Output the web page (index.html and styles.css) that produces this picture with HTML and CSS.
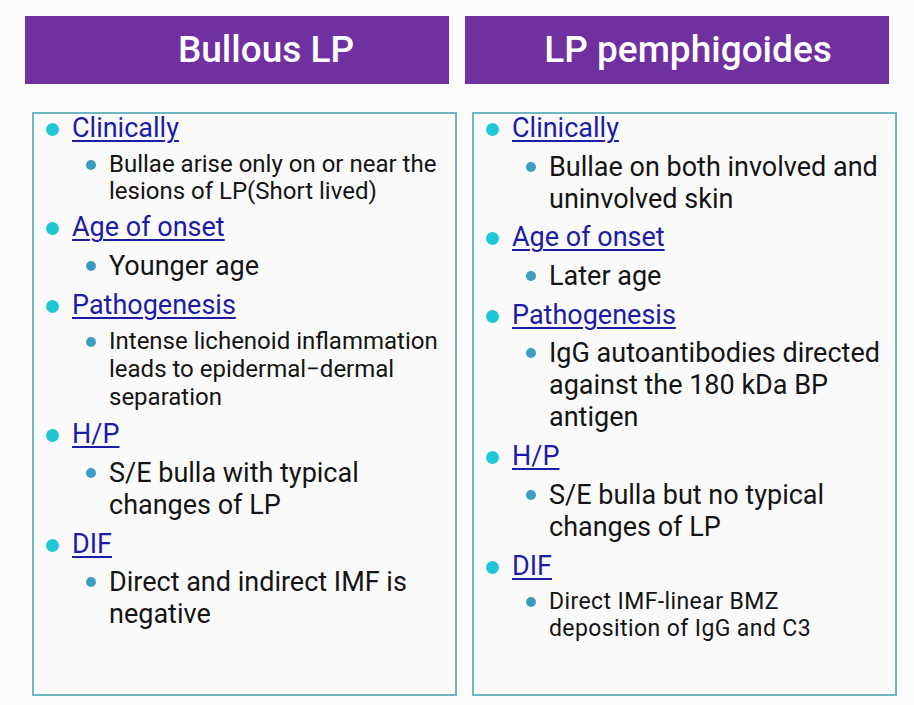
FILE: index.html
```html
<!DOCTYPE html>
<html lang="en">
<head>
<meta charset="utf-8">
<title>Bullous LP vs LP pemphigoides</title>
<link rel="stylesheet" href="styles.css">
</head>
<body>
<main class="page">
  <section class="col">
    <h1 class="title title-left">Bullous LP</h1>
    <div class="box">
      <ul class="l1">
        <li>
          <div class="row r1"><span class="dot1"></span><a class="head">Clinically</a></div>
          <ul class="l2">
            <li class="row r2 s24"><span class="dot2"></span><span class="txt">Bullae arise only on or near the lesions of LP(Short lived)</span></li>
          </ul>
        </li>
        <li>
          <div class="row r1"><span class="dot1"></span><a class="head">Age of onset</a></div>
          <ul class="l2">
            <li class="row r2"><span class="dot2"></span><span class="txt">Younger age</span></li>
          </ul>
        </li>
        <li>
          <div class="row r1"><span class="dot1"></span><a class="head">Pathogenesis</a></div>
          <ul class="l2">
            <li class="row r2 s24b"><span class="dot2"></span><span class="txt">Intense lichenoid inflammation leads to epidermal&minus;dermal separation</span></li>
          </ul>
        </li>
        <li>
          <div class="row r1"><span class="dot1"></span><a class="head">H/P</a></div>
          <ul class="l2">
            <li class="row r2"><span class="dot2"></span><span class="txt">S/E bulla with typical changes of LP</span></li>
          </ul>
        </li>
        <li>
          <div class="row r1"><span class="dot1"></span><a class="head">DIF</a></div>
          <ul class="l2">
            <li class="row r2"><span class="dot2"></span><span class="txt">Direct and indirect IMF is negative</span></li>
          </ul>
        </li>
      </ul>
    </div>
  </section>
  <section class="col">
    <h1 class="title title-right">LP pemphigoides</h1>
    <div class="box">
      <ul class="l1">
        <li>
          <div class="row r1"><span class="dot1"></span><a class="head">Clinically</a></div>
          <ul class="l2">
            <li class="row r2"><span class="dot2"></span><span class="txt">Bullae on both involved and uninvolved skin</span></li>
          </ul>
        </li>
        <li>
          <div class="row r1"><span class="dot1"></span><a class="head">Age of onset</a></div>
          <ul class="l2">
            <li class="row r2"><span class="dot2"></span><span class="txt">Later age</span></li>
          </ul>
        </li>
        <li>
          <div class="row r1"><span class="dot1"></span><a class="head">Pathogenesis</a></div>
          <ul class="l2">
            <li class="row r2"><span class="dot2"></span><span class="txt">IgG autoantibodies directed against the 180 kDa BP antigen</span></li>
          </ul>
        </li>
        <li>
          <div class="row r1"><span class="dot1"></span><a class="head">H/P</a></div>
          <ul class="l2">
            <li class="row r2"><span class="dot2"></span><span class="txt">S/E bulla but no typical changes of LP</span></li>
          </ul>
        </li>
        <li>
          <div class="row r1"><span class="dot1"></span><a class="head">DIF</a></div>
          <ul class="l2">
            <li class="row r2 s22"><span class="dot2"></span><span class="txt">Direct IMF-linear BMZ deposition of IgG and C3</span></li>
          </ul>
        </li>
      </ul>
    </div>
  </section>
</main>
</body>
</html>
```

FILE: styles.css
```css
* { box-sizing: border-box; }

html, body {
  margin: 0;
  padding: 0;
  background: #fbfbfb;
}

body {
  font-family: Roboto, "Noto Sans", "Liberation Sans", sans-serif;
  color: #141414;
  width: 914px;
  height: 705px;
  overflow: hidden;
}

.page {
  display: grid;
  grid-template-columns: 432px 432px;
  column-gap: 8px;
  padding: 16px 0 0 25px;
}

.col {
  display: flex;
  flex-direction: column;
}

.title {
  margin: 0;
  width: 424px;
  height: 68px;
  background: #7030a0;
  color: #ffffff;
  font-size: 37px;
  font-weight: 500;
  line-height: 68px;
  text-align: center;
  white-space: nowrap;
}

.title-left { padding-left: 58px; }
.title-right { padding-left: 22px; }

.box {
  margin: 28px 0 0 7px;
  width: 425px;
  height: 584px;
  border: 2px solid #6db7c3;
  background: #fafafa;
  padding: 0;
}

ul {
  list-style: none;
  margin: 0;
  padding: 0;
}

.l1 {
  margin-top: -2px;
}

.row {
  display: flex;
  align-items: flex-start;
}

.l1 > li + li,
.l2 {
  margin-top: 6.7px;
}

.r1 {
  padding-left: 12px;
  font-size: 27px;
  line-height: 32px;
}

.dot1 {
  flex: none;
  width: 13px;
  height: 13px;
  margin-top: 11px;
  margin-right: 13px;
  border-radius: 50%;
  background: #1fc6d6;
}

.head {
  color: #1c1ca6;
  text-decoration: underline;
  text-decoration-thickness: 1.5px;
  text-underline-offset: 3px;
}

.r2 {
  padding-left: 52px;
  font-size: 27px;
  line-height: 32px;
  --dot: 11px;
}

.dot2 {
  flex: none;
  width: 10px;
  height: 10px;
  margin-top: var(--dot);
  margin-right: 13px;
  border-radius: 50%;
  background: #3a9ec0;
}

.txt {
  max-width: 336px;
}

.s24 {
  font-size: 24px;
  line-height: 27px;
  --dot: 9px;
}

.s24b {
  font-size: 24px;
  line-height: 28px;
  --dot: 9.5px;
}

.s22 {
  font-size: 23px;
  line-height: 27px;
  letter-spacing: 0.4px;
  --dot: 9px;
}

.s22 .txt {
  max-width: 300px;
}
```
